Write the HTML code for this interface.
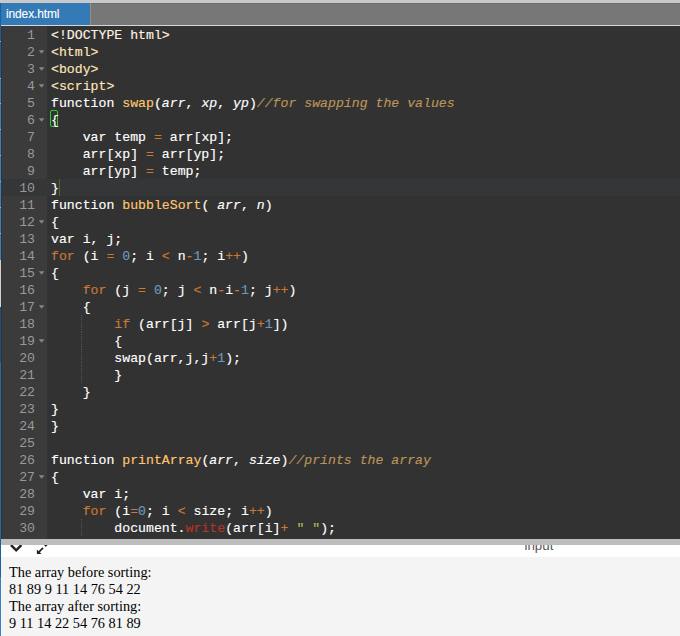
<!DOCTYPE html>
<html><head><meta charset="utf-8">
<style>
html,body{margin:0;padding:0;width:680px;height:636px;overflow:hidden;background:#f4f4f4;position:relative}
#topband{position:absolute;left:0;top:0;width:680px;height:3px;background:#c9c9c9}
#tabbar{position:absolute;left:0;top:3px;width:680px;height:22px;background:#777}
#tab{position:absolute;left:1px;top:0;width:89px;height:22px;background:#337ab7;color:#fff;font-family:"Liberation Sans",sans-serif;font-size:12px;line-height:22px;padding-left:5px;letter-spacing:-0.13px;-webkit-text-stroke:0.1px #fff;box-sizing:border-box}
#tabsep{position:absolute;left:90px;top:0;width:1px;height:22px;background:#958d88}
#tabtop{position:absolute;left:91px;top:0;width:589px;height:1px;background:#6c6c6c}
#tabline{position:absolute;left:0;top:25px;width:680px;height:1px;background:#d6d6d6}
#editor{position:absolute;left:0;top:26px;width:680px;height:513px;background:#323232;overflow:hidden}
#gutter{position:absolute;left:0;top:0;width:47px;height:513px;background:#3b3b3b}
.gl{position:absolute;left:0;width:47px;height:17px;color:#999;font-family:"Liberation Mono",monospace;font-size:13.2px;line-height:17px;text-align:right;box-sizing:border-box;padding-right:12px;padding-top:1px}
.gl.act{background:#353637}
.actline{position:absolute;left:47px;top:153px;width:633px;height:17px;background:#353637}
.fw{position:absolute;left:0;top:0;width:47px;height:17px;background:#858585;clip-path:polygon(38.8px 7.2px,44.4px 7.2px,41.6px 10.8px)}
.ln{position:absolute;left:51px;margin-top:1px;height:17px;white-space:pre;color:#fff;font-family:"Liberation Mono",monospace;font-size:13.2px;line-height:17px;-webkit-text-stroke:0.15px currentColor}
.ig{position:absolute;left:81px;width:0;height:17px;border-left:1px dotted #555}
.brk{position:absolute;left:50px;top:84px;width:6px;height:15px;border:1px solid #33cc33;border-radius:2px}
.cur{position:absolute;left:59px;top:153px;width:1px;height:17px;background:#4a6a26}
#leftstrip{position:absolute;left:0;top:0;width:1px;height:636px;background:linear-gradient(to bottom,#c9c9c9 0,#c9c9c9 3px,#1f5e9e 3px,#1f5e9e 79px,#3a7ec1 79px,#3a7ec1 260px,#d4d4d4 260px,#d4d4d4 307px,#1a4f85 307px,#1a4f85 362px,#2468ad 362px,#2468ad 539px,#1f5e9e 539px,#1f5e9e 577px,#3a7ec1 577px)}
#gutline{position:absolute;left:1px;top:0;width:1px;height:513px;background:#37312e}
#grayband{position:absolute;left:0;top:539px;width:680px;height:6px;background:#bdbdbd}
#whitebar{position:absolute;left:0;top:545px;width:680px;height:12px;background:#fff;overflow:hidden}
#inputlbl{position:absolute;left:524.5px;top:-7px;font-family:"Liberation Sans",sans-serif;font-size:13.3px;line-height:15px;color:#555}
#output{position:absolute;left:9px;top:564px;font-family:"Liberation Serif",serif;font-size:14.3px;line-height:17px;color:#000}
.k{color:#cc7833}.f{color:#ffc66d}.p{font-style:italic}.c{font-style:italic;color:#bc9458}.n{color:#6c99bb}.t{color:#ffe5bb}.d{color:#fff3e0}.s{color:#b83426}.o{color:#cc7833}.q{color:#a5c261}
</style></head><body>
<div id="topband"></div>
<div id="tabbar"><div id="tab">index.html</div><div id="tabsep"></div><div id="tabtop"></div></div>
<div id="tabline"></div>
<div id="editor">
<div id="gutter"><div id="gutline"></div>
<div class="gl" style="top:0px">1</div>
<div class="gl" style="top:17px">2<i class="fw"></i></div>
<div class="gl" style="top:34px">3<i class="fw"></i></div>
<div class="gl" style="top:51px">4<i class="fw"></i></div>
<div class="gl" style="top:68px">5</div>
<div class="gl" style="top:85px">6<i class="fw"></i></div>
<div class="gl" style="top:102px">7</div>
<div class="gl" style="top:119px">8</div>
<div class="gl" style="top:136px">9</div>
<div class="gl act" style="top:153px">10</div>
<div class="gl" style="top:170px">11</div>
<div class="gl" style="top:187px">12<i class="fw"></i></div>
<div class="gl" style="top:204px">13</div>
<div class="gl" style="top:221px">14</div>
<div class="gl" style="top:238px">15<i class="fw"></i></div>
<div class="gl" style="top:255px">16</div>
<div class="gl" style="top:272px">17<i class="fw"></i></div>
<div class="gl" style="top:289px">18</div>
<div class="gl" style="top:306px">19<i class="fw"></i></div>
<div class="gl" style="top:323px">20</div>
<div class="gl" style="top:340px">21</div>
<div class="gl" style="top:357px">22</div>
<div class="gl" style="top:374px">23</div>
<div class="gl" style="top:391px">24</div>
<div class="gl" style="top:408px">25</div>
<div class="gl" style="top:425px">26</div>
<div class="gl" style="top:442px">27<i class="fw"></i></div>
<div class="gl" style="top:459px">28</div>
<div class="gl" style="top:476px">29</div>
<div class="gl" style="top:493px">30</div>
</div>
<div class="actline"></div>
<div class="ig" style="top:289px"></div><div class="ig" style="top:306px"></div><div class="ig" style="top:323px"></div><div class="ig" style="top:340px"></div><div class="ig" style="top:493px"></div>
<div class="brk"></div>
<div class="ln" style="top:0px"><span class="d">&lt;!DOCTYPE html&gt;</span></div>
<div class="ln" style="top:17px"><span class="t">&lt;html&gt;</span></div>
<div class="ln" style="top:34px"><span class="t">&lt;body&gt;</span></div>
<div class="ln" style="top:51px"><span class="t">&lt;script&gt;</span></div>
<div class="ln" style="top:68px">function <span class="f">swap</span>(<span class="p">arr</span>, <span class="p">xp</span>, <span class="p">yp</span>)<span class="c">//for swapping the values</span></div>
<div class="ln" style="top:85px">{</div>
<div class="ln" style="top:102px">    var temp <span class="o">=</span> arr[xp];</div>
<div class="ln" style="top:119px">    arr[xp] <span class="o">=</span> arr[yp];</div>
<div class="ln" style="top:136px">    arr[yp] <span class="o">=</span> temp;</div>
<div class="ln" style="top:153px">}</div>
<div class="ln" style="top:170px">function <span class="f">bubbleSort</span>( <span class="p">arr</span>, <span class="p">n</span>)</div>
<div class="ln" style="top:187px">{</div>
<div class="ln" style="top:204px">var i, j;</div>
<div class="ln" style="top:221px"><span class="k">for</span> (i <span class="o">=</span> <span class="n">0</span>; i <span class="o">&lt;</span> n<span class="o">-</span><span class="n">1</span>; i<span class="o">++</span>)</div>
<div class="ln" style="top:238px">{</div>
<div class="ln" style="top:255px">    <span class="k">for</span> (j <span class="o">=</span> <span class="n">0</span>; j <span class="o">&lt;</span> n<span class="o">-</span>i<span class="o">-</span><span class="n">1</span>; j<span class="o">++</span>)</div>
<div class="ln" style="top:272px">    {</div>
<div class="ln" style="top:289px">        <span class="k">if</span> (arr[j] <span class="o">&gt;</span> arr[j<span class="o">+</span><span class="n">1</span>])</div>
<div class="ln" style="top:306px">        {</div>
<div class="ln" style="top:323px">        swap(arr,j,j<span class="o">+</span><span class="n">1</span>);</div>
<div class="ln" style="top:340px">        }</div>
<div class="ln" style="top:357px">    }</div>
<div class="ln" style="top:374px">}</div>
<div class="ln" style="top:391px">}</div>
<div class="ln" style="top:408px"></div>
<div class="ln" style="top:425px">function <span class="f">printArray</span>(<span class="p">arr</span>, <span class="p">size</span>)<span class="c">//prints the array</span></div>
<div class="ln" style="top:442px">{</div>
<div class="ln" style="top:459px">    var i;</div>
<div class="ln" style="top:476px">    <span class="k">for</span> (i<span class="o">=</span><span class="n">0</span>; i <span class="o">&lt;</span> size; i<span class="o">++</span>)</div>
<div class="ln" style="top:493px">        document.<span class="s">write</span>(arr[i]<span class="o">+</span> <span class="q">&quot; &quot;</span>);</div>
<div class="cur"></div>
</div>
<div id="grayband"></div>
<div id="whitebar"><svg width="680" height="12" viewBox="0 545 680 12" style="position:absolute;left:0;top:0">
<polyline points="11,545 16.2,550.3 21.4,545" fill="none" stroke="#262626" stroke-width="2.5"/>
<path d="M36.9,549.6 L36.9,554 L41.5,554 Z" fill="#222"/>
<line x1="38.6" y1="552.3" x2="43" y2="547.9" stroke="#222" stroke-width="1.7"/>
<path d="M43.8,544.6 L48,544.6 L45.6,547 Z" fill="#222"/>
</svg><div id="inputlbl">input</div></div>
<div id="leftstrip"></div><div style="position:absolute;left:0;top:41px;width:1px;height:1px;background:#9db8d3"></div><div style="position:absolute;left:0;top:78px;width:1px;height:1px;background:#9db8d3"></div><div style="position:absolute;left:0;top:103px;width:1px;height:1px;background:#9db8d3"></div><div style="position:absolute;left:0;top:129px;width:1px;height:1px;background:#9db8d3"></div><div style="position:absolute;left:0;top:155px;width:1px;height:1px;background:#9db8d3"></div><div style="position:absolute;left:0;top:181px;width:1px;height:1px;background:#9db8d3"></div><div style="position:absolute;left:0;top:207px;width:1px;height:1px;background:#9db8d3"></div><div style="position:absolute;left:0;top:233px;width:1px;height:1px;background:#9db8d3"></div>
<div id="output">The array before sorting:<br>81 89 9 11 14 76 54 22<br>The array after sorting:<br>9 11 14 22 54 76 81 89</div>
</body></html>
